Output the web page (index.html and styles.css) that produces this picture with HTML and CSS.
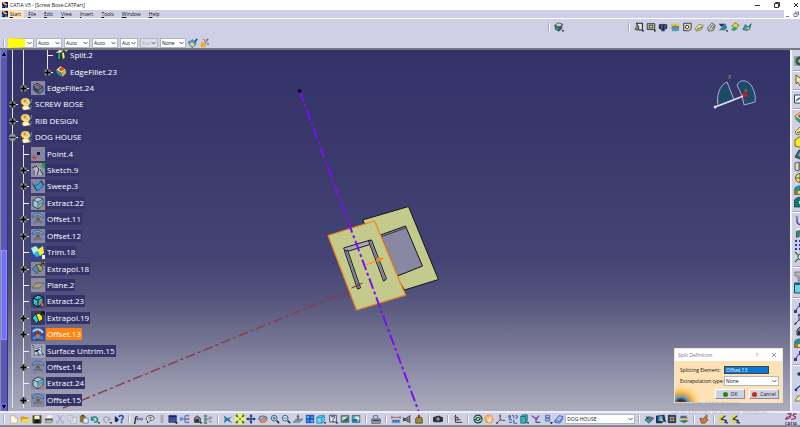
FILE: index.html
```html
<!DOCTYPE html>
<html lang="en">
<head>
    <meta charset="UTF-8">
    <meta name="viewport" content="width=device-width, initial-scale=1.0">
    <title>CATIA V5 - [Screw Bose.CATPart]</title>
    <link rel="stylesheet" href="styles.css">
</head>
<body>
    <!-- icon sprite -->
    <svg class="sprite" aria-hidden="true">
        <symbol id="app" viewBox="0 0 12 12"><path fill="#101c50" d="M0 0h12v12H0z"/><path fill="#f59a28" d="M0 0h5l3 5-3 2z"/><path fill="#f8f0c0" d="M6 2l4 3-2 3z"/><path fill="#3a88d0" d="M7 7l5 5H6zM0 6l3 3-3 2z"/></symbol>
        <symbol id="plus" viewBox="0 0 11 16"><path stroke="#f2f2f8" d="M5 8.500h6"/><circle cx="5.500" cy="8.500" r="3.400" fill="#85858a"/><path stroke="#000" stroke-width="1.500" d="M2.500 8.500h6M5.500 5.500v6"/></symbol>
        <symbol id="minus" viewBox="0 0 11 16"><path stroke="#f2f2f8" d="M5 8.500h6"/><circle cx="5.500" cy="8.500" r="3.400" fill="#9a9a9e"/><path stroke="#222" stroke-width="1.500" d="M2.500 8.500h6"/></symbol>
        <symbol id="tick" viewBox="0 0 11 16"><path stroke="#f2f2f8" d="M5 8.500h6"/></symbol>
        <symbol id="t-split" viewBox="0 0 14 14"><path fill="#2fa8a0" stroke="#061818" stroke-width=".8" d="M3 5l3-2v8l-3 1z"/><path fill="#e8e070" stroke="#222" stroke-width=".8" d="M7 4l3-1 1 6-3 3z"/><path fill="#f5eebb" d="M1 4l4-3 4 1-3 2z"/><path stroke="#f0e860" d="M12 0v3M10.500 1.500h3"/></symbol>
        <symbol id="t-fillet" viewBox="0 0 14 14"><path fill="#f4eda8" stroke="#333" stroke-width=".7" d="M1 5l5-4 6 4-5 4z"/><path fill="#2f9c74" d="M1 5l6 4v4L2 9z"/><path fill="#d8452c" d="M4 4l4-2 2 3-4 2z"/><path fill="#c9b458" d="M7 9l5-4v4l-4 4z"/></symbol>
        <symbol id="t-fillet2" viewBox="0 0 14 14"><path fill="#8888a4" d="M0 0h14v14H0z"/><path fill="#6284a8" stroke="#223" stroke-width=".8" d="M2 5l4-3 6 4-5 3z"/><path fill="#3e3e66" d="M2 5l5 4v4L2 9z"/><path fill="#a14650" d="M5 4l3-1 3 3-3 1z"/><path fill="#557894" stroke="#223" stroke-width=".6" d="M7 9l5-3v4l-4 3z"/></symbol>
        <symbol id="t-body" viewBox="0 0 14 14"><path fill="#f3df8a" stroke="#7d4d18" stroke-width=".6" d="M1 3c1-4 8-4 9-1 2 2 1 5-1 6l3 4-9 1-1-3 2-2C2 7 0 5 1 3z"/><path fill="#e08a2c" d="M3 3l3-2 1 2-2 2zM6 5l2-1v2z"/><path fill="#f8f8f0" d="M4 9l5 1v2l-5 1z"/><path fill="none" stroke="#38a0d8" d="M12 1c1 3 0 4-1 5M11 8c2 1 1 3-1 4"/></symbol>
        <symbol id="t-point" viewBox="0 0 14 14"><path fill="#86869c" d="M0 0h14v14H0z"/><path fill="#16164a" d="M6 5h3v3H6z"/><path stroke="#c23636" d="M3 8v4M1 10l4 2M3 12l3-3"/></symbol>
        <symbol id="t-sketch" viewBox="0 0 14 14"><path fill="#8e8ea0" d="M0 0h14v14H0z"/><path fill="#b8b8c8" d="M2 7l4-4 5 3v6H2z"/><path fill="none" stroke="#333348" d="M1 5l4-2 3 3-2 6M3 7v5M9 6l3 6"/><path fill="#18a02c" d="M11 0h3v6l-3-2z"/></symbol>
        <symbol id="t-sweep" viewBox="0 0 14 14"><path fill="#8686a2" d="M0 0h14v14H0z"/><path fill="#3a9cd2" stroke="#184068" stroke-width=".7" d="M3 6c3 1 5-1 7-4l2 4c-1 3-4 5-6 6z"/><path stroke="#184068" d="M1 4l5 8M10 1l3 5"/></symbol>
        <symbol id="t-extract" viewBox="0 0 14 14"><path fill="#8c8ca2" d="M0 0h14v14H0z"/><path fill="#a9c4d0" stroke="#1c3444" stroke-width=".8" d="M2 4l5-3 5 2v6l-5 4-5-3z"/><path fill="none" stroke="#1c4c60" stroke-width=".8" d="M2 4l5 2 5-3M7 6v7"/><path fill="#3b9fc4" d="M8 7l3-2v3l-3 2z"/><path stroke="#c88a34" d="M9 8l3 4"/></symbol>
        <symbol id="t-extract2" viewBox="0 0 14 14"><path fill="#40406e" d="M0 0h14v14H0z"/><path fill="#36b8c8" stroke="#04141c" d="M2 4l5-3 5 2v6l-5 4-5-3z"/><path fill="none" stroke="#04141c" d="M2 4l5 2 5-3M7 6v7"/><path stroke="#e8602c" stroke-width="2" d="M9 7l3 5"/></symbol>
        <symbol id="t-offset" viewBox="0 0 14 14"><path fill="#8888a2" d="M0 0h14v14H0z"/><path fill="#6aa2cc" stroke="#2d4c84" stroke-width=".7" d="M1 4c3-4 9-4 12 1l-2 1C9 3 5 3 2 6z"/><path fill="#5679b4" d="M2 10c3-3 7-3 10 0l-1 2c-3-2-5-2-8 0z"/><path stroke="#a86820" stroke-width="2" d="M7 5v6"/><path stroke="#5c3c20" d="M5 7h4"/></symbol>
        <symbol id="t-offset2" viewBox="0 0 14 14"><path fill="#48487e" d="M0 0h14v14H0z"/><path fill="#9adcf4" stroke="#2266cc" stroke-width=".8" d="M1 4c3-4 9-4 12 1l-2 2C9 3 5 3 2 6z"/><path fill="#3486e4" d="M1 11c3-4 9-4 12 0l-2 2c-3-2-5-2-8 0z"/><path stroke="#f06c18" stroke-width="2.500" d="M7 4v7"/><path fill="#a42418" d="M5 7h4l-2-4z"/></symbol>
        <symbol id="t-trim" viewBox="0 0 14 14"><path fill="#2846a8" d="M0 1h14v12H0z"/><path fill="#b4f0e0" d="M0 3l5-2 3 4-5 5z"/><path fill="#f6ee2e" d="M6 5l6-4 1 7-4 3z"/><path fill="#2ab8e0" d="M3 8l4-2 2 5-4 1z"/><path fill="#f0f0d0" d="M11 10h3v4h-3z"/></symbol>
        <symbol id="t-extrapol" viewBox="0 0 14 14"><path fill="#8989a0" d="M0 0h14v14H0z"/><path fill="#5488a8" stroke="#25405c" stroke-width=".6" d="M1 7l4-4 4 3-3 6z"/><path fill="#a8a05c" stroke="#34342c" stroke-width=".7" d="M5 3l5-1 2 5-3 3z"/><path stroke="#222" d="M9 4l4-3M13 1h-3M13 1v3"/></symbol>
        <symbol id="t-extrapol2" viewBox="0 0 14 14"><path fill="#3a3a68" d="M0 0h14v14H0z"/><path fill="#3cc0e0" stroke="#081c28" stroke-width=".8" d="M1 7l4-4 4 3-3 7z"/><path fill="#f2ea20" stroke="#101008" stroke-width=".8" d="M5 3l5-1 2 6-4 3z"/><path stroke="#000" d="M9 4l4-3M13 1h-3M13 1v3"/></symbol>
        <symbol id="t-plane" viewBox="0 0 14 14"><path fill="#8e8e9e" d="M0 0h14v14H0z"/><path fill="#a29c88" stroke="#5c5848" stroke-width=".8" d="M1 10l4-5h8l-4 5z"/></symbol>
        <symbol id="t-untrim" viewBox="0 0 14 14"><path fill="#a2a2b2" d="M0 0h14v14H0z"/><path fill="#c8dce8" stroke="#3c6484" stroke-width=".7" d="M2 3l4 2 5-3-1 5 2 4-5-1-4 2 1-5z"/><path stroke="#2c5478" d="M3 7l3 1 3-3M7 8l1 4M1 1l2 1M11 9l2 2"/></symbol>

        <symbol id="brush" viewBox="0 0 12 12"><path fill="#4aa0e0" stroke="#205088" stroke-width=".6" d="M0 5l6-3 4 5-5 5z"/><path fill="#e8d850" d="M2 7l3-2 3 3-3 3z"/><path stroke="#205088" stroke-width="2" d="M8 5l3-4"/></symbol>
        <symbol id="wizard" viewBox="0 0 12 12"><circle cx="4" cy="8" r="3.300" fill="#eab030"/><path stroke="#4870c0" stroke-width="1.300" d="M6 6l4-5M8 7h3"/><path stroke="#c83c3c" d="M4 1l2 3M8 1v2"/></symbol>
        <symbol id="new" viewBox="0 0 12 12"><path fill="#fffbd8" stroke="#a8a488" stroke-width=".7" d="M2 2h5l3 3v6H2z"/><path fill="none" stroke="#a8a488" stroke-width=".7" d="M7 2v3h3"/></symbol>
        <symbol id="open" viewBox="0 0 12 12"><path fill="#d8a010" d="M1 3h4l1 1h4v6H1z"/><path fill="#f8d848" d="M3 6h9l-2 4H1z"/></symbol>
        <symbol id="save" viewBox="0 0 12 12"><path fill="#5b5a18" stroke="#28280c" stroke-width=".6" d="M1 2h10v9H1z"/><path fill="#f0f0d8" d="M3 2h6v4H3z"/><path fill="#16160a" d="M3 7h6v4H3z"/></symbol>
        <symbol id="print" viewBox="0 0 12 12"><path fill="#f4f4ec" d="M4 2l5-1 1 4H3z"/><path fill="#8a9098" d="M1 5h10v4l-2 2H1z"/><path fill="#d8cc38" d="M3 8h6v2H3z"/><path fill="#384858" d="M1 6h9v1H1z"/></symbol>
        <symbol id="cut" viewBox="0 0 12 12"><path fill="none" stroke="#a0a0b4" stroke-width="1.200" d="M3 1l5 8M9 1L4 9"/><circle cx="3" cy="10" r="1.300" fill="none" stroke="#a0a0b4"/><circle cx="9" cy="10" r="1.300" fill="none" stroke="#a0a0b4"/></symbol>
        <symbol id="copy" viewBox="0 0 12 12"><path fill="#e4e4ee" stroke="#a0a0b4" stroke-width=".7" d="M1 2h6v6H1zM4 4h7v7H4z"/></symbol>
        <symbol id="paste" viewBox="0 0 12 12"><path fill="#8c7c28" d="M1 2h7v8H1z"/><path fill="#484018" d="M3 1h3v2H3z"/><path fill="#e8e8f8" stroke="#384070" stroke-width=".6" d="M5 5h6v6H5z"/></symbol>
        <symbol id="undo" viewBox="0 0 12 12"><path fill="none" stroke="#18907c" stroke-width="1.800" d="M2 6c3-4 7-3 7 1 0 2-2 3-4 3"/><path fill="#18907c" d="M1 2v6h5z"/><path d="M9 10h3l-1 2z"/></symbol>
        <symbol id="redo" viewBox="0 0 12 12"><path fill="none" stroke="#a6a6ba" stroke-width="1.500" d="M9 6C6 2 2 3 2 7c0 2 2 3 4 3"/><path fill="#a6a6ba" d="M10 3v5H6z"/><path d="M9 10h3l-1 2z"/></symbol>
        <symbol id="help" viewBox="0 0 12 12"><path fill="#18284c" d="M1 2l5 5-3 3-2-1z"/><path fill="none" stroke="#164c90" stroke-width="1.700" d="M6 4c0-3 5-3 5 0 0 2-2 2-2 4"/><path fill="#164c90" d="M8 9h2v2H8z"/></symbol>
        <symbol id="chat" viewBox="0 0 12 12"><path fill="#f4f4f4" stroke="#383840" d="M2 4c1-3 9-3 9 1 0 2-3 3-5 3l-3 3V8C1 7 1 5 2 4z"/><path stroke="#555" d="M4 4h5M4 6h4"/></symbol>
        <symbol id="link" viewBox="0 0 12 12"><path fill="none" stroke="#a6a6b8" stroke-width="1.500" d="M5 2h2v3H5zM5 6h2v4H5z"/></symbol>
        <symbol id="table" viewBox="0 0 12 12"><path fill="#424e98" stroke="#1a2050" stroke-width=".7" d="M1 2h9v8H1z"/><path fill="#1c2468" d="M1 2h9v2H1z"/><path d="M8 10h4l-2 2z"/></symbol>
        <symbol id="tree" viewBox="0 0 12 12"><path fill="none" stroke="#4848a8" d="M3 6h3M6 2v8M6 2h2M6 6h2M6 10h2"/><path fill="#3e92e4" d="M0 4h3v4H0zM8 1h3v2H8zM8 9h3v2H8z"/><path fill="#d44a4a" d="M8 5h3v2H8z"/></symbol>
        <symbol id="lock" viewBox="0 0 12 12"><path fill="#888" stroke="#2c2c30" d="M3 5l3-3 4 3v5H3z"/><path fill="#303038" d="M4 6h4v4H4z"/><path d="M9 10h3l-1 2z"/></symbol>
        <symbol id="nodes" viewBox="0 0 12 12"><path stroke="#566" d="M3 2v8M3 6h6"/><path fill="#6c8c84" d="M1 1h4v3H1zM1 5h4v3H1zM1 9h4v3H1z"/><path fill="#90a0a0" d="M7 3h4v3H7zM7 8h4v2H7z"/></symbol>
        <symbol id="fly" viewBox="0 0 12 12"><path fill="#248c9c" d="M1 2l4 3 6-2-4 4 3 3-5-2-4 3 1-5z"/><path stroke="#345" d="M2 3l8 7"/></symbol>
        <symbol id="fit" viewBox="0 0 12 12"><path fill="#f2ee70" d="M0 0h12v12H0z"/><path stroke="#187050" stroke-width="1.300" d="M1 1l3 3M11 1L8 4M1 11l3-3M11 11L8 8"/><path fill="#187050" d="M5 5h2v2H5zM1 1h3L1 4zM11 1v3L8 1zM1 11V8l3 3zM11 11H8l3-3z"/></symbol>
        <symbol id="pan" viewBox="0 0 12 12"><path stroke="#1d3c70" stroke-width="1.600" d="M6 1v10M1 6h10"/><path fill="#1d3c70" d="M6 0l2 3H4zM6 12l2-3H4zM0 6l3-2v4zM12 6L9 4v4z"/></symbol>
        <symbol id="rotate" viewBox="0 0 12 12"><path fill="none" stroke="#3c64a8" stroke-width="1.400" d="M1 7c0-6 9-6 10-1"/><path fill="#d69070" stroke="#704030" stroke-width=".6" d="M2 7l5-3 4 3-3 3H3z"/></symbol>
        <symbol id="zoomin" viewBox="0 0 12 12"><circle cx="5" cy="5" r="3.400" fill="#def4f8" stroke="#1c4868"/><path stroke="#1c4868" d="M3 5h4M5 3v4"/><path stroke="#1c3858" stroke-width="2" d="M8 8l3 3"/></symbol>
        <symbol id="zoomout" viewBox="0 0 12 12"><circle cx="5" cy="5" r="3.400" fill="#def4f8" stroke="#1c4868"/><path stroke="#1c4868" d="M3 5h4"/><path stroke="#1c3858" stroke-width="2" d="M8 8l3 3"/></symbol>
        <symbol id="normal" viewBox="0 0 12 12"><path fill="#68b0b8" stroke="#2c6070" stroke-width=".6" d="M0 10l4-4h8l-4 4z"/><path stroke="#905838" stroke-width="1.500" d="M6 8V2"/><path fill="#905838" d="M6 0l2 4H4z"/></symbol>
        <symbol id="quad" viewBox="0 0 12 12"><path fill="#2058b0" d="M1 1h10v10H1z"/><path fill="#35c0ec" d="M2 2h3v3H2zM7 7h3v3H7z"/><path fill="#4484ec" d="M7 2h3v3H7zM2 7h3v3H2z"/></symbol>
        <symbol id="cube" viewBox="0 0 12 12"><path fill="#5edcf8" stroke="#1468a0" stroke-width=".8" d="M1 4l3-2h6v6l-3 3H1z"/><path fill="none" stroke="#1468a0" stroke-width=".8" d="M1 4h6v7M7 4l3-2"/><path d="M9 10h3l-1 2z"/></symbol>
        <symbol id="query" viewBox="0 0 12 12"><path fill="#e8e8f2" stroke="#303c50" d="M2 1.500h8v8H2z"/><path fill="none" stroke="#182848" stroke-width="1.200" d="M4 4c0-2 4-2 4 0 0 1-2 1-2 3"/><path d="M5 8h2v1H5zM9 10h3l-1 2z"/></symbol>
        <symbol id="photo" viewBox="0 0 12 12"><path fill="#54b8c0" stroke="#44506c" d="M1.500 2h9v8h-9z"/><path fill="#e8e088" d="M3 4l5-1-1 3-4 2z"/><path fill="#286858" d="M2 9l3-2 5-3v5z"/></symbol>
        <symbol id="swap" viewBox="0 0 12 12"><path fill="#4abce0" stroke="#44506c" d="M1.500 2h9v8h-9z"/><path fill="#e4e8c0" d="M5 3h5v4H5z"/><path fill="#206890" d="M2 6h5v3H2z"/></symbol>
        <symbol id="printer" viewBox="0 0 12 12"><path fill="#c8ccd4" stroke="#303440" d="M1 6h10v5H1z"/><path fill="none" stroke="#3466a0" d="M3 5V2h5v3"/><path fill="#3a4450" d="M2 7h8v2H2z"/></symbol>
        <symbol id="measure" viewBox="0 0 12 12"><path fill="#6894d0" d="M1 7h10v4H1z"/><path stroke="#23386c" d="M3 7v2M5 7v2M7 7v2M9 7v2"/><path stroke="#a04848" d="M1 4h10M1 2v4M11 2v4"/></symbol>
        <symbol id="speaker" viewBox="0 0 12 12"><path fill="#505058" d="M1 4l3 1 6-4v10L4 8 1 9z"/><path stroke="#a0a090" d="M6 4v4M8 3v6"/></symbol>
        <symbol id="weight" viewBox="0 0 12 12"><path fill="#a8862c" stroke="#3c3010" stroke-width=".8" d="M3 4h6l1 2v5H2V6z"/><path fill="#4a3c14" d="M5 1h2v3H5z"/></symbol>
        <symbol id="camera" viewBox="0 0 12 12"><path fill="#303038" d="M0 4l3-1 2-1h3l1 1 3 1v5l-3 1H2l-2-1z"/><circle cx="6" cy="6" r="2" fill="#9898a0"/></symbol>
        <symbol id="axes" viewBox="0 0 12 12"><path fill="none" stroke="#404048" stroke-width="1.200" d="M3 1v9h8M3 4h3M3 7h6M6 4v3"/><path stroke="#b05050" d="M1 3h3M1 6h3"/></symbol>
        <symbol id="update" viewBox="0 0 12 12"><circle cx="6" cy="6" r="5.500" fill="#1c4860"/><path fill="none" stroke="#b8e4a0" stroke-width="1.500" d="M2 6c1-4 6-4 7-1M10 6c-1 4-6 4-7 1"/><circle cx="6" cy="6" r="1.300" fill="#e8f0b0"/></symbol>
        <symbol id="hand" viewBox="0 0 12 12"><circle cx="6" cy="6" r="5.500" fill="#f0a058"/><path fill="#fbe4c0" d="M3 5h1V3h1v2h1V2h1v3h1V3h1v5l-2 2H5z"/></symbol>
        <symbol id="axis" viewBox="0 0 12 12"><path fill="none" stroke="#38384a" d="M5 1v6l6 1M5 7l-4 4"/><path fill="#38384a" d="M5 0l1 3H4zM0 12l1-3 2 2z"/></symbol>
        <symbol id="dims" viewBox="0 0 12 12"><path fill="none" stroke="#405ca0" stroke-width="1.200" d="M1 2h2v3H1zM5 2h2v3M9 2h2v3H9M1 7h4M7 7v4h4M1 10h4"/></symbol>
        <symbol id="part" viewBox="0 0 12 12"><path fill="#34b4b8" stroke="#185860" stroke-width=".8" d="M2 3l2-2h6v7l-2 3H2z"/><path fill="none" stroke="#185860" stroke-width=".8" d="M2 3h6v8"/><path d="M9 10h3l-1 2z"/></symbol>
        <symbol id="target" viewBox="0 0 12 12"><path fill="none" stroke="#3848c8" stroke-width="1.300" d="M1 2l5 4 4-4M6 6v4h5"/><path fill="#c84848" d="M5 4h3v3H5z"/></symbol>
        <symbol id="stack" viewBox="0 0 12 12"><path fill="#aab8e8" stroke="#4862b8" d="M3 1.500h5v3H3zM3 5.500h5v3H3z"/><path d="M8 10h4l-2 2z"/></symbol>
        <symbol id="erase" viewBox="0 0 12 12"><path fill="#a4c4f4" stroke="#2c54b8" d="M1 8l5-6 5 1-4 6z"/><path fill="none" stroke="#2c54b8" d="M1 8v2l6 1 4-6"/></symbol>
        <symbol id="color" viewBox="0 0 12 12"><path fill="#2a9cac" stroke="#183848" stroke-width=".6" d="M1 7l5-4 6 2-6 6z"/><path fill="#d84838" d="M6 6l5-3-2 5z"/><path fill="#181820" d="M2 2l4 3-2 1z"/></symbol>
        <symbol id="surf" viewBox="0 0 12 12"><path fill="#1c3058" d="M0 2l10-1 2 9-3-1-2 2H0z"/><path fill="#40b4d0" d="M3 3l5-1v5L3 9z"/><path fill="#eadc58" d="M5 4l4 4-3 1z"/></symbol>
        <symbol id="sphere" viewBox="0 0 12 12"><path fill="#3a4460" d="M1 1h10v10H1z"/><circle cx="6" cy="6" r="3.500" fill="#e4d898" stroke="#182030"/><path stroke="#182030" d="M3 6h6M6 3v6"/></symbol>
        <symbol id="layers" viewBox="0 0 12 12"><path fill="#20806c" d="M0 8l7-1 5 1-6 3z"/><path fill="#e8c030" d="M1 5l5-1 5 1-6 3z"/><path fill="#2f6fc0" d="M2 2h8l-3 3H1z"/><path fill="#c84030" d="M8 3l3 2H7z"/></symbol>
        <symbol id="glove" viewBox="0 0 12 12"><path fill="#cc7c34" stroke="#68380c" stroke-width=".7" d="M1 5l4 1 4-5 1 1-1 4 2 1-4 4H3z"/></symbol>
        <symbol id="hook" viewBox="0 0 12 12"><path fill="#e0d838" d="M1 3l5-2 3 2-5 4 4 3-3 1-4-3z"/><path fill="none" stroke="#202c58" stroke-width="1.400" d="M9 2L4 6l6 2-2 3"/><path d="M9 10h3l-1 2z"/></symbol>

        <symbol id="box" viewBox="0 0 12 12"><path fill="#2f96a0" stroke="#10303c" stroke-width=".8" d="M1 4l5 2v5L2 9z"/><path fill="#cbd8a0" stroke="#10303c" stroke-width=".8" d="M1 4l4-3 6 2-5 3z"/><path fill="#48586c" d="M6 6l4-2v4l-4 3z"/><path d="M9 10h3l-1 2z"/></symbol>
        <symbol id="pad" viewBox="0 0 12 12"><path fill="#f0ecd0" stroke="#1c2050" stroke-width="1.300" d="M3 1.500h7v8H6z"/><path fill="#8c8850" stroke="#222" stroke-width=".6" d="M1 9l3-5 2 1-1 5z"/><path d="M9 10h3l-1 2z"/></symbol>
        <symbol id="pocket" viewBox="0 0 12 12"><path fill="#c8c070" stroke="#202450" d="M1.500 2h9v7h-9z"/><path fill="#f4f0d0" stroke="#202450" d="M4 4h4v3H4z"/><path d="M9 10h3l-1 2z"/></symbol>
        <symbol id="shaft" viewBox="0 0 12 12"><path fill="#23305c" d="M1 3l4-1 1 1 1-1 4 1v5l-3 1v2H4V9L1 8z"/><path fill="#70909c" d="M4 3h1v5H4zM8 3h1v5H8z"/></symbol>
        <symbol id="disc" viewBox="0 0 12 12"><path fill="#e4c82c" d="M1 2h10v3H1z"/><path fill="#c8502c" d="M2 5h9v2H2z"/><path fill="#4aa0b4" d="M1 7h10v3l-3 1H3z"/><circle cx="6" cy="6" r="2" fill="#4b8ca8"/></symbol>
        <symbol id="hole" viewBox="0 0 12 12"><path fill="#e0d890" stroke="#202450" d="M2 1.500h9v7l-3 2H2z"/><circle cx="6" cy="6" r="2" fill="#fff" stroke="#202450"/></symbol>
        <symbol id="rib" viewBox="0 0 12 12"><path fill="#f0e898" stroke="#70602c" stroke-width=".8" d="M1 8l5-5 5 1-2 5-6 2z"/><path fill="none" stroke="#403818" d="M3 9l7-3"/></symbol>
        <symbol id="slot" viewBox="0 0 12 12"><path fill="#e8e4b4" stroke="#2a3058" stroke-width=".8" d="M2 7l5-6 4 3-2 6-6 1z"/><path stroke="#2a3058" d="M4 9l4-6M7 9l3-5"/></symbol>
        <symbol id="multi" viewBox="0 0 12 12"><path fill="#248494" d="M1 10L9 2l2 5-3 3z"/><path fill="#222c60" d="M1 2h8L4 6z"/><path d="M9 10h3l-1 2z"/></symbol>
        <symbol id="thick" viewBox="0 0 12 12"><path fill="#e8dc30" stroke="#403c10" stroke-width=".7" d="M2 5l4-4 5 3-4 4z"/><path fill="#34a478" d="M1 9l5-4 3 3-4 3z"/></symbol>
        <symbol id="wave" viewBox="0 0 12 12"><path fill="#30a8a8" stroke="#184048" stroke-width=".7" d="M1 9l3-6 3 3 4-4-2 7-4 1z"/><path fill="#e8d850" d="M5 8l3-2 1 3z"/></symbol>

        <symbol id="gear" viewBox="0 0 12 12"><path fill="#7cb49c" d="M0 1h8v10H0z"/><circle cx="6" cy="6" r="4.500" fill="#44504c"/><circle cx="6" cy="6" r="2" fill="#a8b0a8"/></symbol>
        <symbol id="arrow" viewBox="0 0 12 12"><path fill="#f8ee98" stroke="#38342c" stroke-width=".8" d="M2 1l8 6H6l2 4-2 1-2-4-2 2z"/></symbol>
        <symbol id="sheet" viewBox="0 0 12 12"><path fill="#fff" stroke="#34406c" d="M.500 2h10v8H.500z"/><path stroke="#3c8878" stroke-width="1.500" d="M2 8l3-3 2 2 4-4"/></symbol>
        <symbol id="draft" viewBox="0 0 12 12"><path fill="#f4ec20" stroke="#54500c" stroke-width=".8" d="M1 10V4l4-3 6 2v7l-6 1z"/></symbol>
        <symbol id="shell" viewBox="0 0 12 12"><path fill="#4c6470" stroke="#1c2c34" stroke-width=".8" d="M1 9l4-7 6 2v6l-5 1z"/><path fill="#6cb4b8" d="M4 8l2-4 4 1v3z"/></symbol>
        <symbol id="thread" viewBox="0 0 12 12"><path fill="#e4dca0" stroke="#2c4860" stroke-width=".8" d="M1 3l4-1v9l-4-1z"/><path fill="#78b4c8" stroke="#2c4860" stroke-width=".8" d="M6 2h6v8H6z"/></symbol>
        <symbol id="globe" viewBox="0 0 12 12"><circle cx="6" cy="6" r="4.500" fill="#e8dc88" stroke="#60582c"/><path stroke="#60582c" d="M1 6h10M6 1v10"/></symbol>
        <symbol id="curve" viewBox="0 0 12 12"><path fill="none" stroke="#38406c" stroke-width="1.200" d="M3 1v5c0 4 4 4 8 4"/><circle cx="3" cy="2" r="1.500" fill="#8890b8"/></symbol>
        <symbol id="dots" viewBox="0 0 12 12"><path fill="#3034a8" d="M1 1h2v2H1zM5 1h2v2H5zM9 1h2v2H9zM1 5h2v2H1zM5 5h2v2H5zM9 5h2v2H9zM1 9h2v2H1zM5 9h2v2H5zM9 9h2v2H9z"/></symbol>
        <symbol id="scale" viewBox="0 0 12 12"><path fill="none" stroke="#207050" stroke-width="1.200" d="M1 1l3 3M1 11l3-3"/><circle cx="7" cy="6" r="3" fill="#e8f0d0" stroke="#305840"/></symbol>
        <symbol id="roof" viewBox="0 0 12 12"><path fill="#2c8c94" d="M0 5c2-5 10-5 12 0v6H0z"/><path fill="#e05c20" d="M1 7h11v3H1z"/><path fill="#f4dc40" d="M4 7h3v3H4z"/></symbol>
        <symbol id="arch" viewBox="0 0 12 12"><path fill="#14747c" stroke="#0b3338" stroke-width=".7" d="M0 5c2-5 10-5 12 0v6H0z"/><path fill="#f4e870" d="M5 5h3v3H5z"/></symbol>
        <symbol id="gray" viewBox="0 0 12 12"><path fill="#b8b8b8" stroke="#7c7c80" d="M1 2h10v4H6v5H4V6H1z"/></symbol>
        <symbol id="window" viewBox="0 0 12 12"><path fill="#6cd4dc" stroke="#1c4460" d="M.500 1h11v10H.500z"/><path fill="#24588c" d="M0 1h12v2H0z"/></symbol>
        <symbol id="constraint" viewBox="0 0 12 12"><path fill="none" stroke="#343c80" d="M1 10l5-6 5-1"/><path fill="#343c80" d="M0 9h3v3H0zM5 2h5v4H5z"/></symbol>
        <symbol id="dot" viewBox="0 0 12 12"><circle cx="5" cy="6" r="1.700" fill="#183878"/></symbol>
        <symbol id="line" viewBox="0 0 12 12"><path stroke="#203c70" stroke-width="1.300" d="M1 10L11 2"/><circle cx="2" cy="10" r="1.300" fill="#203c70"/></symbol>
        <symbol id="plane" viewBox="0 0 12 12"><path fill="#f0e89c" stroke="#6c6438" stroke-width=".8" d="M1 9l3-5h8l-3 5z"/></symbol>
    </svg>

    <header>
        <div class="titlebar">
            <svg class="logo"><use href="#app"/></svg>
            <h1>CATIA V5 - [Screw Bose.CATPart]</h1>
            <div class="window-buttons">
                <button aria-label="Minimize"><svg viewBox="0 0 8 8"><path d="M1 4.500h5"/></svg></button>
                <button aria-label="Restore"><svg viewBox="0 0 8 8"><path d="M2.500 2.500v-1h4v4h-1M1.500 2.500h4v4h-4z"/></svg></button>
                <button aria-label="Close"><svg viewBox="0 0 8 8"><path d="M2 2l4 4M6 2L2 6"/></svg></button>
            </div>
        </div>
        <nav class="menubar">
            <svg class="logo"><use href="#app"/></svg>
            <a class="active" href="#"><u>S</u>tart</a>
            <a href="#"><u>F</u>ile</a>
            <a href="#"><u>E</u>dit</a>
            <a href="#"><u>V</u>iew</a>
            <a href="#"><u>I</u>nsert</a>
            <a href="#"><u>T</u>ools</a>
            <a href="#"><u>W</u>indow</a>
            <a href="#"><u>H</u>elp</a>
            <div class="document-buttons">
                <button aria-label="Minimize document"><svg viewBox="0 0 8 8"><path d="M2 6.500h3"/></svg></button>
                <button aria-label="Restore document"><svg viewBox="0 0 8 8"><path d="M3.500 3v-1h3v3h-1M2 3.500h3v3H2z"/></svg></button>
            </div>
        </nav>
        <div class="toolbars">
            <div class="toolbar features">
                <span class="sep"></span>
                <button aria-label="View"><svg><use href="#box"/></svg></button>
                <span class="sep second"></span>
                <button aria-label="Pad"><svg><use href="#pad"/></svg></button>
                <button aria-label="Pocket"><svg><use href="#pocket"/></svg></button>
                <button aria-label="Shaft"><svg><use href="#shaft"/></svg></button>
                <button aria-label="Groove"><svg><use href="#disc"/></svg></button>
                <button aria-label="Hole"><svg><use href="#hole"/></svg></button>
                <button aria-label="Rib"><svg><use href="#rib"/></svg></button>
                <button aria-label="Slot"><svg><use href="#slot"/></svg></button>
                <button aria-label="Stiffener"><svg><use href="#multi"/></svg></button>
                <button aria-label="Thick surface"><svg><use href="#thick"/></svg></button>
                <button aria-label="Close surface"><svg><use href="#wave"/></svg></button>
            </div>
            <div class="toolbar properties">
                <span class="sep"></span>
                <select class="fill" aria-label="Fill colour"><option></option></select>
                <select aria-label="Transparency"><option>Auto</option></select>
                <select aria-label="Line thickness"><option>Auto</option></select>
                <select aria-label="Line type"><option>Auto</option></select>
                <select class="short" aria-label="Point symbol"><option>Aut</option></select>
                <select class="short" aria-label="Rendering style" disabled><option>Aut</option></select>
                <select aria-label="Layer"><option>None</option></select>
                <button aria-label="Painter"><svg><use href="#brush"/></svg></button>
                <button aria-label="Wizard"><svg><use href="#wizard"/></svg></button>
            </div>
        </div>
    </header>

    <main>
        <div class="scrollbar">
            <button aria-label="Scroll up"><svg viewBox="0 0 6 6"><path d="M3 1l2 4H1z"/></svg></button>
            <span class="track"></span>
            <span class="thumb"></span>
            <span class="track low"></span>
            <button aria-label="Scroll down"><svg viewBox="0 0 6 6"><path d="M3 5l2-4H1z"/></svg></button>
        </div>
        <div class="viewport">
            <svg class="scene" viewBox="7 50 783 361" preserveAspectRatio="none">
                <!-- rear plate -->
                <path class="plate" d="M362 220l46-13.500 30 73-34 10.500z"/>
                <path class="hole" d="M380 235l25-9 17 40-25 10z"/>
                <path fill="none" stroke="#111" stroke-width=".7" d="M380 237l25-9"/>
                <!-- dashed axis to the front plate -->
                <path class="axis-red" d="M62 408L360 286"/>
                <!-- front plate -->
                <path class="front" d="M327.500 235.500L374 221l31 74-49 15z"/>
                <path class="slot" d="M343 248l27-8 1 4-26 8z"/>
                <path class="slot" d="M344 251l3-1 13 38-3 1z"/>
                <path class="slot" d="M368 241l3-1 15 39-3 2z"/>
                <path fill="none" stroke="#222" stroke-width=".5" d="M345.500 250.500l13 38M369.500 240.500l15 39.500"/>
                <path stroke="#6b2a20" d="M351 288l11-5"/>
                <path class="axis-purple" d="M299 91L418 411"/>
                <circle cx="299" cy="91" r="2" fill="#0c0c30"/>
                <path stroke="#f58a1c" stroke-width="1.200" d="M365 265l14-5"/>
                <path fill="#f58a1c" d="M376 257.500l8 .5-6.500 4z"/>
                <!-- compass -->
                <path class="compass" d="M718 106c-2-9 1-21 9-24l7 18z"/>
                <path class="compass" d="M737 85c3-6 9-5 13-1 4 5 6 12 5 18l-11 3-2-9z"/>
                <path stroke="#e6dcf8" stroke-width="1.500" d="M715 107l31-12"/>
                <circle cx="715" cy="107" r="1.500" fill="#e6dcf8"/>
                <path fill="#e01010" d="M743 93h4v4h-4z"/>
                <text class="compass-label" x="728" y="78">y</text>
                <text class="compass-label" x="744" y="92">x</text>
                <text class="compass-label" x="716" y="103">z</text>
            </svg>
            <ul class="tree">
                <li class="l3"><svg class="node"><use href="#tick"/></svg><svg class="icon"><use href="#t-split"/></svg><span>Split.2</span></li>
                <li class="l3 last"><svg class="node"><use href="#plus"/></svg><svg class="icon"><use href="#t-fillet"/></svg><span>EdgeFillet.23</span></li>
                <li class="l2 last"><svg class="node"><use href="#plus"/></svg><svg class="icon"><use href="#t-fillet2"/></svg><span>EdgeFillet.24</span></li>
                <li class="l1"><svg class="node"><use href="#plus"/></svg><svg class="icon"><use href="#t-body"/></svg><span>SCREW BOSE</span></li>
                <li class="l1"><svg class="node"><use href="#plus"/></svg><svg class="icon"><use href="#t-body"/></svg><span>RIB DESIGN</span></li>
                <li class="l1"><svg class="node"><use href="#minus"/></svg><svg class="icon"><use href="#t-body"/></svg><span>DOG HOUSE</span></li>
                <li class="l2"><svg class="node"><use href="#tick"/></svg><svg class="icon"><use href="#t-point"/></svg><span>Point.4</span></li>
                <li class="l2"><svg class="node"><use href="#plus"/></svg><svg class="icon"><use href="#t-sketch"/></svg><span>Sketch.9</span></li>
                <li class="l2"><svg class="node"><use href="#plus"/></svg><svg class="icon"><use href="#t-sweep"/></svg><span>Sweep.3</span></li>
                <li class="l2"><svg class="node"><use href="#tick"/></svg><svg class="icon"><use href="#t-extract"/></svg><span>Extract.22</span></li>
                <li class="l2"><svg class="node"><use href="#plus"/></svg><svg class="icon"><use href="#t-offset"/></svg><span>Offset.11</span></li>
                <li class="l2"><svg class="node"><use href="#plus"/></svg><svg class="icon"><use href="#t-offset"/></svg><span>Offset.12</span></li>
                <li class="l2"><svg class="node"><use href="#tick"/></svg><svg class="icon"><use href="#t-trim"/></svg><span>Trim.18</span></li>
                <li class="l2"><svg class="node"><use href="#plus"/></svg><svg class="icon"><use href="#t-extrapol"/></svg><span>Extrapol.18</span></li>
                <li class="l2"><svg class="node"><use href="#tick"/></svg><svg class="icon"><use href="#t-plane"/></svg><span>Plane.2</span></li>
                <li class="l2"><svg class="node"><use href="#tick"/></svg><svg class="icon"><use href="#t-extract2"/></svg><span>Extract.23</span></li>
                <li class="l2"><svg class="node"><use href="#plus"/></svg><svg class="icon"><use href="#t-extrapol2"/></svg><span>Extrapol.19</span></li>
                <li class="l2 selected"><svg class="node"><use href="#plus"/></svg><svg class="icon"><use href="#t-offset2"/></svg><span>Offset.13</span></li>
                <li class="l2"><svg class="node"><use href="#tick"/></svg><svg class="icon"><use href="#t-untrim"/></svg><span>Surface Untrim.15</span></li>
                <li class="l2"><svg class="node"><use href="#plus"/></svg><svg class="icon"><use href="#t-offset"/></svg><span>Offset.14</span></li>
                <li class="l2"><svg class="node"><use href="#tick"/></svg><svg class="icon"><use href="#t-extract"/></svg><span>Extract.24</span></li>
                <li class="l2"><svg class="node"><use href="#plus"/></svg><svg class="icon"><use href="#t-offset"/></svg><span>Offset.15</span></li>
            </ul>
            <form class="dialog">
                <div class="dialog-title">
                    <h2>Split Definition</h2>
                    <button type="button">?</button>
                    <button type="button" aria-label="Close"><svg viewBox="0 0 8 8"><path d="M2 2l4 4M6 2L2 6"/></svg></button>
                </div>
                <div class="dialog-body">
                    <label for="element">Splitting Element:</label>
                    <input id="element" type="text" value="Offset.13">
                    <label for="extrapolation">Extrapolation type:</label>
                    <select id="extrapolation"><option>None</option></select>
                    <div class="dialog-buttons">
                        <button type="button"><i class="ok"></i>OK</button>
                        <button type="button"><i class="cancel"></i>Cancel</button>
                    </div>
                </div>
            </form>
        </div>
        <div class="toolbar side">
            <button aria-label="Workbench"><svg><use href="#gear"/></svg></button>
            <span class="sep"></span>
            <button aria-label="Select"><svg><use href="#arrow"/></svg></button>
            <span class="sep"></span>
            <button aria-label="Sketch"><svg><use href="#sheet"/></svg></button>
            <span class="sep"></span>
            <button aria-label="Fillet"><svg><use href="#t-fillet"/></svg></button>
            <button aria-label="Chamfer"><svg><use href="#rib"/></svg></button>
            <button aria-label="Draft"><svg><use href="#draft"/></svg></button>
            <button aria-label="Shell"><svg><use href="#shell"/></svg></button>
            <button aria-label="Thickness"><svg><use href="#thread"/></svg></button>
            <button aria-label="Thread"><svg><use href="#globe"/></svg></button>
            <button aria-label="Remove face"><svg><use href="#roof"/></svg></button>
            <button aria-label="Replace face"><svg><use href="#arch"/></svg></button>
            <span class="sep"></span>
            <button aria-label="Translation"><svg><use href="#curve"/></svg></button>
            <button aria-label="Mirror"><svg><use href="#t-split"/></svg></button>
            <button aria-label="Pattern"><svg><use href="#dots"/></svg></button>
            <button aria-label="Scale"><svg><use href="#scale"/></svg></button>
            <span class="sep"></span>
            <button aria-label="Insert body"><svg><use href="#gray"/></svg></button>
            <button aria-label="Assemble"><svg><use href="#window"/></svg></button>
            <span class="sep"></span>
            <button aria-label="Constraint"><svg><use href="#constraint"/></svg></button>
            <button aria-label="Contact"><svg><use href="#axis"/></svg></button>
            <button aria-label="Analysis"><svg><use href="#lock"/></svg></button>
            <button aria-label="Draft analysis"><svg><use href="#roof"/></svg></button>
            <button aria-label="Curvature"><svg><use href="#constraint"/></svg></button>
            <span class="sep"></span>
            <button aria-label="Point"><svg><use href="#dot"/></svg></button>
            <button aria-label="Line"><svg><use href="#line"/></svg></button>
            <button aria-label="Plane"><svg><use href="#plane"/></svg></button>
        </div>
        <div class="watermark">
            <p class="big">Activate Windows</p>
            <p>Go to Settings to activate Windows.</p>
        </div>
    </main>

    <footer>
        <div class="toolbar tools">
            <span class="sep first"></span>
            <button aria-label="New"><svg><use href="#new"/></svg></button>
            <button aria-label="Open"><svg><use href="#open"/></svg></button>
            <button aria-label="Save"><svg><use href="#save"/></svg></button>
            <button aria-label="Print"><svg><use href="#print"/></svg></button>
            <button aria-label="Cut"><svg><use href="#cut"/></svg></button>
            <button aria-label="Copy"><svg><use href="#copy"/></svg></button>
            <button aria-label="Paste"><svg><use href="#paste"/></svg></button>
            <button aria-label="Undo"><svg><use href="#undo"/></svg></button>
            <button aria-label="Redo"><svg><use href="#redo"/></svg></button>
            <button aria-label="What's this"><svg><use href="#help"/></svg></button>
            <span class="sep"></span>
            <button class="formula">f<sub>(x)</sub></button>
            <button aria-label="Comment"><svg><use href="#chat"/></svg></button>
            <button aria-label="Link"><svg><use href="#link"/></svg></button>
            <button aria-label="Design table"><svg><use href="#table"/></svg></button>
            <button aria-label="Relations"><svg><use href="#tree"/></svg></button>
            <button aria-label="Lock"><svg><use href="#lock"/></svg></button>
            <button aria-label="Equivalent dimensions"><svg><use href="#nodes"/></svg></button>
            <span class="sep"></span>
            <button aria-label="Fly mode"><svg><use href="#fly"/></svg></button>
            <button aria-label="Fit all in"><svg><use href="#fit"/></svg></button>
            <button aria-label="Pan"><svg><use href="#pan"/></svg></button>
            <button aria-label="Rotate"><svg><use href="#rotate"/></svg></button>
            <button aria-label="Zoom in"><svg><use href="#zoomin"/></svg></button>
            <button aria-label="Zoom out"><svg><use href="#zoomout"/></svg></button>
            <button aria-label="Normal view"><svg><use href="#normal"/></svg></button>
            <button aria-label="Multi-view"><svg><use href="#quad"/></svg></button>
            <button aria-label="Isometric view"><svg><use href="#cube"/></svg></button>
            <button aria-label="View mode"><svg><use href="#query"/></svg></button>
            <button aria-label="Hide/Show"><svg><use href="#photo"/></svg></button>
            <button aria-label="Swap visible space"><svg><use href="#swap"/></svg></button>
            <span class="sep"></span>
            <button aria-label="Quick print"><svg><use href="#printer"/></svg></button>
            <span class="sep"></span>
            <button aria-label="Measure between"><svg><use href="#measure"/></svg></button>
            <button aria-label="Measure item"><svg><use href="#speaker"/></svg></button>
            <button aria-label="Measure inertia"><svg><use href="#weight"/></svg></button>
            <span class="sep"></span>
            <button aria-label="Capture"><svg><use href="#camera"/></svg></button>
            <span class="sep"></span>
            <button aria-label="Grid"><svg><use href="#axes"/></svg></button>
            <span class="sep"></span>
            <button aria-label="Update all"><svg><use href="#update"/></svg></button>
            <button aria-label="Manual update"><svg><use href="#hand"/></svg></button>
            <button aria-label="Axis system"><svg><use href="#axis"/></svg></button>
            <button aria-label="Mean dimensions"><svg><use href="#dims"/></svg></button>
            <button aria-label="Catalog"><svg><use href="#part"/></svg></button>
            <button aria-label="Selection set"><svg><use href="#target"/></svg></button>
            <button aria-label="Only current body"><svg><use href="#stack"/></svg></button>
            <button aria-label="Selection sets"><svg><use href="#erase"/></svg></button>
            <select class="current" aria-label="Current body"><option>DOG HOUSE</option></select>
            <span class="sep"></span>
            <button aria-label="Draft colours"><svg><use href="#color"/></svg></button>
            <button aria-label="Surface curvature"><svg><use href="#surf"/></svg></button>
            <button aria-label="Thread analysis"><svg><use href="#sphere"/></svg></button>
            <button aria-label="Layers"><svg><use href="#layers"/></svg></button>
            <span class="sep"></span>
            <button aria-label="Apply material"><svg><use href="#glove"/></svg></button>
            <span class="sep"></span>
            <button aria-label="Power copy"><svg><use href="#hook"/></svg></button>
            <button aria-label="Instantiate"><svg><use href="#hook"/></svg></button>
        </div>
        <div class="brand">
            <svg viewBox="0 0 13 9"><path fill="none" stroke="#8c2450" stroke-width="1.200" d="M2 1h4c1 1-1 3-5 4l-1 2c4 0 5-2 6-3M12 1c-4 0-5 2-2 3s0 3-4 3"/></svg>
            <span>CATIA</span>
        </div>
    </footer>
</body>
</html>
```

FILE: styles.css
```css
* {
    box-sizing: border-box;
}
body {
    margin: 0;
    height: 100vh;
    display: flex;
    flex-direction: column;
    overflow: hidden;
    font-family: "Open Sans", "Noto Sans", sans-serif;
    font-size: 5px;
    line-height: 8px;
    color: #111;
    background-color: #cfcfe6;
}
.sprite {
    display: none;
}
h1, h2, p, ul {
    margin: 0;
    padding: 0;
    font-size: inherit;
    font-weight: normal;
}
button, select, input {
    font: inherit;
    color: inherit;
    border: none;
    margin: 0;
    padding: 0;
    background: none;
}
button {
    display: flex;
    align-items: center;
    justify-content: center;
    flex-shrink: 0;
}
a {
    color: inherit;
    text-decoration: none;
}
select {
    appearance: none;
    height: 10px;
    padding: 0 1px;
    border: 1px solid #b4b4c4;
    background: #fff url("data:image/svg+xml,%3Csvg xmlns='http://www.w3.org/2000/svg' width='5' height='4'%3E%3Cpath d='M.5 1l2 2 2-2' fill='none' stroke='%23555'/%3E%3C/svg%3E") no-repeat right 1px center;
}

/* title and menu */
.titlebar {
    display: flex;
    align-items: center;
    height: 10px;
    padding-left: 2px;
    gap: 2px;
    background-color: #fff;
}
.logo {
    width: 6px;
    height: 6px;
}
.window-buttons {
    display: flex;
    gap: 11px;
    margin-left: auto;
}
.window-buttons svg, .document-buttons svg, .dialog-title svg {
    width: 8px;
    height: 8px;
    fill: none;
    stroke: #333;
    stroke-width: 1;
}
.menubar {
    display: flex;
    align-items: center;
    height: 8px;
    padding-left: 2px;
}
.menubar a {
    padding: 0 4px;
}
.menubar .active {
    padding: 0 3px 0 2px;
    background-color: #fbe2b6;
}
.document-buttons {
    display: flex;
    margin-left: auto;
    background-color: #fff;
}
.document-buttons svg {
    stroke: #77a;
}

/* toolbars */
.toolbars {
    height: 32px;
    padding-top: 2px;
    border-top: 1px solid #fff;
    border-bottom: 2px solid #77777f;
}
.toolbar {
    display: flex;
    align-items: center;
}
.toolbar svg {
    flex-shrink: 0;
    width: 10px;
    height: 10px;
}
.toolbar button {
    width: 12px;
    height: 12px;
}
.toolbar .sep {
    flex-shrink: 0;
    width: 8px;
    height: 8px;
    background: linear-gradient(90deg, #a4a4b8 1px, #fff 1px, #fff 2px, transparent 2px) no-repeat 3px 0;
}
.features {
    justify-content: flex-end;
    padding-right: 47px;
    height: 12px;
}
.features .second {
    margin-left: 60px;
}
.properties {
    height: 12px;
    margin-top: 4px;
    gap: 2px;
}
.properties .sep {
    width: 6px;
}
.properties button {
    width: 10px;
}
.properties select {
    width: 26px;
}
.properties .short {
    width: 18px;
}
.properties select:disabled {
    color: #aaa;
    opacity: 1;
    background-color: #dedeea;
}
.properties .fill {
    border-left-width: 17px;
    border-left-color: #ffff00;
}

/* viewport */
main {
    position: relative;
    z-index: 1;
    flex: 1;
    min-height: 0;
    display: flex;
}
.scrollbar {
    display: flex;
    flex-direction: column;
    width: 8px;
    border-left: 1px solid #8c8c98;
    border-right: 1px solid #34347c;
    background-color: #5858b8;
}
.scrollbar svg {
    width: 6px;
    height: 6px;
}
.scrollbar button {
    width: 6px;
    height: 8px;
    background-color: #6464e0;
}
.scrollbar .track {
    flex: 193;
}
.scrollbar .thumb {
    flex: 89;
    background-color: #7070f8;
    border: 1px solid #9090ff;
}
.scrollbar .low {
    flex: 63;
}
.viewport {
    position: relative;
    flex: 1;
    overflow: hidden;
    background: linear-gradient(#33336a 0%, #38386c 25%, #444474 58%, #52527c 68%, #737392 80%, #9696ae 92%, #acacbc 100%);
}
.scene {
    position: absolute;
    inset: 0;
    width: 100%;
    height: 100%;
}
.plate {
    fill: #c3ca8c;
    stroke: #15150c;
}
.hole {
    fill: #8888a2;
    stroke: #111;
}
.front {
    fill: #c3ca8c;
    stroke: #ee8424;
    stroke-width: 1.3;
}
.slot {
    fill: #a8a8c4;
    stroke: #18181c;
}
.axis-red {
    stroke: #8a3c40;
    stroke-width: 1.4;
    stroke-dasharray: 10 3 3 3;
}
.axis-purple {
    stroke: #7a10f0;
    stroke-width: 2;
    stroke-dasharray: 11 3 3 3;
}
.compass {
    fill: #1d4a66;
    stroke: #b4a8dc;
}
.compass-label {
    font-size: 6px;
    fill: #c0a818;
}

/* specification tree */
.tree {
    position: relative;
    width: 130px;
    height: 100%;
    margin-top: -3px;
    display: grid;
    grid-auto-rows: 1fr;
    list-style: none;
    color: #fff;
    font-size: 8px;
    line-height: 10px;
}
.tree li {
    display: flex;
    align-items: center;
    min-height: 0;
    background: linear-gradient(#e4e4f0, #e4e4f0) no-repeat 4px 0 / 1px 100%;
}
.tree .l2 {
    padding-left: 11px;
    background: linear-gradient(#e4e4f0, #e4e4f0) no-repeat 4px 0 / 1px 100%,
                linear-gradient(#e4e4f0, #e4e4f0) no-repeat 15px 0 / 1px 100%;
}
.tree .l2.last {
    background-size: 1px 100%, 1px 50%;
}
.tree .l3 {
    padding-left: 35px;
    background: linear-gradient(#e4e4f0, #e4e4f0) no-repeat 4px 0 / 1px 100%,
                linear-gradient(#e4e4f0, #e4e4f0) no-repeat 15px 0 / 1px 100%,
                linear-gradient(#e4e4f0, #e4e4f0) no-repeat 39px 0 / 1px 100%;
}
.tree .l3.last {
    background-size: 1px 100%, 1px 100%, 1px 50%;
}
.tree .node {
    width: 11px;
    height: 16px;
    margin-left: -1px;
    flex-shrink: 0;
}
.tree .icon {
    width: 14px;
    height: 14px;
    margin-left: 2px;
    flex-shrink: 0;
}
.tree .l1 .icon, .tree .l3 .icon {
    width: 13px;
    height: 13px;
}
.tree span {
    margin-left: 1px;
    padding: 1px 1px;
    white-space: nowrap;
    background-color: #33336a;
}
.tree .l3 span {
    padding: 0 1px;
}
.tree .selected span {
    background-color: #ff8414;
}

/* split definition dialog */
.dialog {
    position: absolute;
    right: 7px;
    bottom: 8px;
    width: 109px;
    background-color: #fce2b4;
    border: 1px solid #e8e4dc;
}
.dialog-title {
    display: flex;
    align-items: center;
    height: 12px;
    padding: 0 4px 0 3px;
    gap: 12px;
    color: #777;
    background-color: #fff;
}
.dialog-title h2 {
    flex: 1;
}
.dialog-title svg {
    stroke: #999;
}
.dialog-body {
    display: grid;
    grid-template-columns: auto 55px;
    align-items: center;
    row-gap: 2px;
    padding: 5px 3px 3px 5px;
    white-space: nowrap;
    background: radial-gradient(circle at 6px 44px, #40301c 5px, #5a9ccc 8px, #f8b03c 12px, #fbd48c 16px, transparent 20px);
}
.dialog input {
    width: 45px;
    height: 8px;
    padding: 0 1px;
    color: #fff;
    border: 1px solid #444;
    background-color: #0878d8;
}
.dialog-buttons {
    grid-column: span 2;
    display: flex;
    justify-content: flex-end;
    gap: 4px;
    margin-top: 1px;
}
.dialog-buttons button {
    width: 30px;
    height: 10px;
    gap: 3px;
    background-color: #cfcfe6;
    border: 1px solid #8888a0;
    border-top-color: #fff;
    border-left-color: #fff;
}
.ok, .cancel {
    width: 5px;
    height: 5px;
    border-radius: 50%;
    background-color: #189018;
}
.cancel {
    background-color: #d02818;
}
.watermark {
    position: absolute;
    right: 30px;
    bottom: -5px;
    width: 99px;
    white-space: nowrap;
    font-size: 6px;
    color: rgba(160, 160, 165, 0.6);
    pointer-events: none;
}
.watermark .big {
    padding-left: 3px;
    font-size: 8px;
    line-height: 10px;
}

/* side toolbar */
.side {
    flex-direction: column;
    align-items: flex-start;
    width: 10px;
    padding: 5px 0 0 2px;
    overflow: hidden;
    border-left: 2px solid #f4f4fc;
}
.side svg {
    width: 12px;
    height: 12px;
}
.side .sep {
    height: 7px;
    margin-left: -1px;
    background: linear-gradient(#a4a4b8 1px, #fff 1px, #fff 2px, transparent 2px) no-repeat 0 3px;
}

/* bottom toolbar */
footer {
    display: flex;
    align-items: center;
    height: 16px;
    border-top: 2px solid #eeeef8;
    border-bottom: 2px solid #88888f;
}
.tools {
    flex: 1;
    min-width: 0;
}
.tools button {
    flex: 1 1 0;
    min-width: 0;
}
.formula {
    font-family: "Liberation Serif", serif;
    font-size: 9px;
    font-style: italic;
    font-weight: bold;
}
.formula sub {
    font-size: 5px;
}
.current {
    flex-shrink: 0;
    width: 70px;
}
.brand {
    width: 15px;
    margin-left: 44px;
    color: #2c3878;
    font-weight: bold;
    font-size: 4px;
    line-height: 5px;
}
.brand svg {
    display: block;
    width: 13px;
    height: 8px;
}
```
